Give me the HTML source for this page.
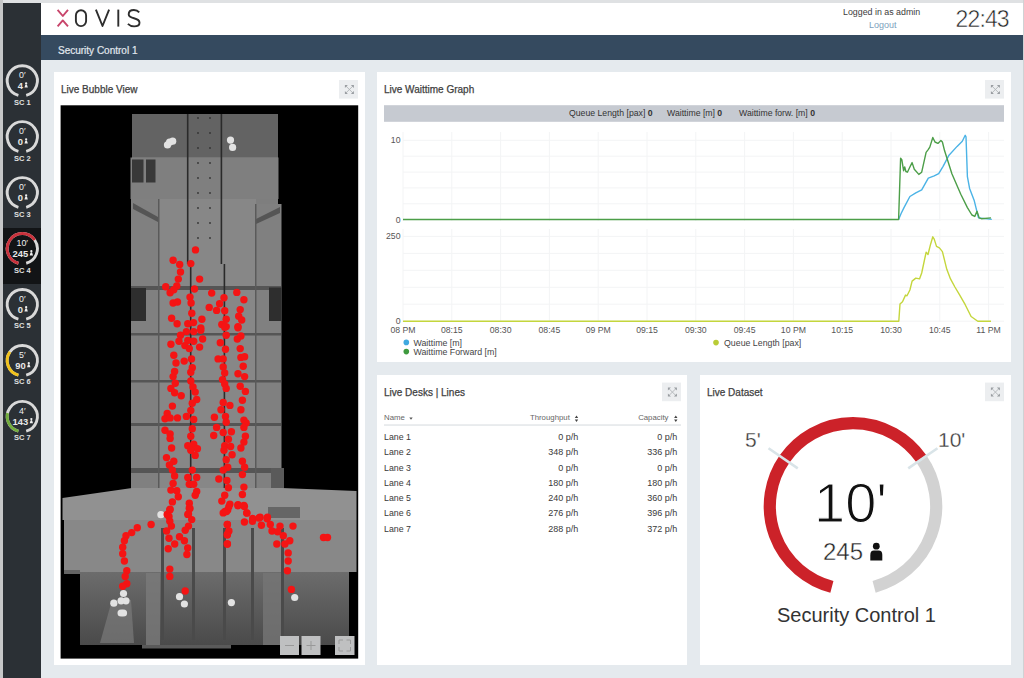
<!DOCTYPE html>
<html><head><meta charset="utf-8">
<style>
*{box-sizing:border-box;margin:0;padding:0}
html,body{width:1024px;height:678px;overflow:hidden;background:#c6c7c8;font-family:"Liberation Sans",sans-serif;color:#333}
.a{position:absolute}
#side{left:3px;top:3px;width:38px;height:675px;background:#2b3035}
#hdr{left:41px;top:3px;width:982px;height:32px;background:#fff}
#nav{left:41px;top:35px;width:982px;height:25px;background:#354a5f}
#cnt{left:41px;top:60px;width:982px;height:618px;background:#e5eaee}
.panel{background:#fff}
.ttl{font-size:10px;color:#3f3f3f;white-space:nowrap;-webkit-text-stroke:0.25px #3f3f3f}
.exp{width:19px;height:19px;background:#e8ebee}
.exp svg{position:absolute;left:0;top:0}
.t{white-space:nowrap;line-height:1}
</style></head><body>
<div class="a" style="left:3px;top:0;width:1021px;height:3px;background:#dfe1e3"></div>
<div class="a" style="left:1023px;top:0;width:1px;height:678px;background:#d0d2d4"></div>
<div class="a" id="side"></div>
<div class="a" id="hdr"></div>
<div class="a" id="nav"></div>
<div class="a" id="cnt"></div>

<!-- header content -->
<div class="a t" style="left:843px;top:7.9px;font-size:8.85px;color:#3c3c3c">Logged in as admin</div>
<div class="a t" style="left:869px;top:21px;font-size:9px;color:#7d9fbd">Logout</div>
<div class="a t" style="left:955.5px;top:7.8px;font-size:23px;letter-spacing:-0.85px;color:#222;-webkit-text-stroke:0.5px #fff">22:43</div>
<div class="a t" style="left:58px;top:45.5px;font-size:10px;color:#e2e8ee;-webkit-text-stroke:0.2px #e2e8ee">Security Control 1</div>

<!-- panels -->
<div class="a panel" style="left:54px;top:72px;width:311px;height:593px"></div>
<div class="a panel" style="left:377px;top:72px;width:634px;height:290px"></div>
<div class="a panel" style="left:377px;top:375px;width:310px;height:290px"></div>
<div class="a panel" style="left:700px;top:375px;width:311px;height:290px"></div>

<div class="a t ttl" style="left:61px;top:84.5px">Live Bubble View</div>
<div class="a t ttl" style="left:384px;top:84.5px">Live Waittime Graph</div>
<div class="a t ttl" style="left:384px;top:387.5px">Live Desks | Lines</div>
<div class="a t ttl" style="left:707px;top:387.5px">Live Dataset</div>

<svg class="a" style="left:0;top:0" width="1024" height="678" viewBox="0 0 1024 678">
<rect x="60.6" y="105.3" width="297.6" height="553.3" fill="#000"/>
<rect x="132" y="114" width="146" height="378" fill="#7e7e7e"/>
<rect x="132" y="114" width="146" height="43.5" fill="#636363"/>
<rect x="130.5" y="157.5" width="148" height="41.5" fill="#7f7f7f"/>
<rect x="132" y="159.5" width="11.5" height="23" fill="#383838"/><rect x="146" y="159.5" width="9.5" height="23" fill="#383838"/><rect x="204" y="200.5" width="5" height="5" fill="#222"/>
<rect x="131" y="199" width="27" height="293" fill="#808080"/>
<rect x="256" y="204" width="25.5" height="288" fill="#808080"/>
<rect x="158" y="199" width="98" height="293" fill="#878787"/>
<polygon points="133,203 158,217 158,222 133,209" fill="#555"/>
<polygon points="280,207 256,219 256,224 280,213" fill="#555"/>
<rect x="131" y="286" width="150" height="4" fill="#555"/>
<rect x="131" y="333" width="150" height="2.5" fill="#555"/>
<rect x="131" y="380" width="150" height="2.5" fill="#555"/>
<rect x="131" y="423" width="150" height="3" fill="#555"/>
<rect x="131" y="468" width="150" height="5" fill="#555"/>
<rect x="131" y="288" width="15" height="33" fill="#2e2e2e"/>
<rect x="269" y="287.5" width="12.5" height="33.5" fill="#2e2e2e"/>

<rect x="271" y="468" width="13" height="24" fill="#5a5a5a"/>
<rect x="186.9" y="114" width="1.6" height="150" fill="#2a2a2a"/><rect x="189.9" y="264" width="1.6" height="246" fill="#2a2a2a"/><rect x="158" y="199" width="1.5" height="293" fill="#5a5a5a"/><rect x="255" y="204" width="1.5" height="288" fill="#5a5a5a"/>
<rect x="220.6" y="114" width="1.6" height="150" fill="#2a2a2a"/><rect x="223.6" y="264" width="1.6" height="246" fill="#2a2a2a"/>
<polygon points="62.5,498 132,488 282,488 356.5,491 356.5,520 62.5,520" fill="#919191"/>
<rect x="64" y="520" width="292.5" height="52" fill="#888"/>
<defs><linearGradient id="lg1" x1="0" y1="0" x2="0" y2="1"><stop offset="0" stop-color="#6c6c6c"/><stop offset="1" stop-color="#4a4a4a"/></linearGradient></defs><rect x="80" y="572" width="269" height="73" fill="url(#lg1)"/>
<rect x="64" y="570" width="16" height="4" fill="#646464"/><rect x="349" y="572" width="7.5" height="0" fill="#000"/>
<rect x="142" y="645" width="89" height="3.5" fill="#5a5a5a"/><rect x="268" y="507" width="32" height="11" fill="#666"/>
<rect x="146" y="573" width="14" height="72" fill="#7a7a7a" opacity="0.8"/><rect x="263" y="573" width="18" height="72" fill="#767676" opacity="0.8"/><polygon points="112,600 131,600 134,643 100,643" fill="#7a7a7a" opacity="0.7"/>
<rect x="161" y="528" width="3" height="112" fill="#4a4a4a"/>
<rect x="192" y="528" width="3" height="112" fill="#4a4a4a"/>
<rect x="223" y="528" width="3" height="112" fill="#4a4a4a"/>
<rect x="251" y="528" width="3" height="112" fill="#4a4a4a"/>
<rect x="281" y="528" width="3" height="112" fill="#4a4a4a"/>
<circle cx="198" cy="118" r="0.9" fill="#333"/><circle cx="210" cy="118" r="0.9" fill="#333"/>
<circle cx="198" cy="133" r="0.9" fill="#333"/><circle cx="210" cy="133" r="0.9" fill="#333"/>
<circle cx="198" cy="148" r="0.9" fill="#333"/><circle cx="210" cy="148" r="0.9" fill="#333"/>
<circle cx="198" cy="163" r="0.9" fill="#333"/><circle cx="210" cy="163" r="0.9" fill="#333"/>
<circle cx="198" cy="178" r="0.9" fill="#333"/><circle cx="210" cy="178" r="0.9" fill="#333"/>
<circle cx="198" cy="193" r="0.9" fill="#333"/><circle cx="210" cy="193" r="0.9" fill="#333"/>
<circle cx="198" cy="208" r="0.9" fill="#333"/><circle cx="210" cy="208" r="0.9" fill="#333"/>
<circle cx="198" cy="223" r="0.9" fill="#333"/><circle cx="210" cy="223" r="0.9" fill="#333"/>
<circle cx="198" cy="238" r="0.9" fill="#333"/><circle cx="210" cy="238" r="0.9" fill="#333"/>
<circle cx="169.6" cy="142.2" r="3.6" fill="#e2e2e2"/>
<circle cx="172.7" cy="141.2" r="3.6" fill="#e2e2e2"/>
<circle cx="167.5" cy="144.9" r="3.6" fill="#e2e2e2"/>
<circle cx="230.5" cy="140.1" r="3.6" fill="#e2e2e2"/>
<circle cx="232.6" cy="147.4" r="3.6" fill="#e2e2e2"/>
<circle cx="160.9" cy="514.7" r="3.6" fill="#e2e2e2"/>
<circle cx="123.5" cy="593.5" r="3.6" fill="#e2e2e2"/>
<circle cx="121.1" cy="600.8" r="3.6" fill="#e2e2e2"/>
<circle cx="126.0" cy="600.8" r="3.6" fill="#e2e2e2"/>
<circle cx="113.8" cy="603.2" r="3.6" fill="#e2e2e2"/>
<circle cx="121.1" cy="613.0" r="3.6" fill="#e2e2e2"/>
<circle cx="123.5" cy="613.0" r="3.6" fill="#e2e2e2"/>
<circle cx="179.5" cy="596.7" r="3.6" fill="#e2e2e2"/>
<circle cx="184.4" cy="604.0" r="3.6" fill="#e2e2e2"/>
<circle cx="231.4" cy="602.6" r="3.6" fill="#e2e2e2"/>
<circle cx="294.7" cy="597.5" r="3.6" fill="#e2e2e2"/>
<circle cx="195.5" cy="249.9" r="3.7" fill="#f41414"/>
<circle cx="173.1" cy="260.2" r="3.7" fill="#f41414"/>
<circle cx="179.7" cy="264.4" r="3.7" fill="#f41414"/>
<circle cx="190.8" cy="263.6" r="3.7" fill="#f41414"/>
<circle cx="180.5" cy="272.0" r="3.7" fill="#f41414"/>
<circle cx="178.3" cy="279.1" r="3.7" fill="#f41414"/>
<circle cx="199.6" cy="279.1" r="3.7" fill="#f41414"/>
<circle cx="165.7" cy="286.8" r="3.7" fill="#f41414"/>
<circle cx="176.8" cy="286.0" r="3.7" fill="#f41414"/>
<circle cx="170.1" cy="292.7" r="3.7" fill="#f41414"/>
<circle cx="173.8" cy="289.7" r="3.7" fill="#f41414"/>
<circle cx="194.5" cy="289.0" r="3.7" fill="#f41414"/>
<circle cx="211.7" cy="293.1" r="3.7" fill="#f41414"/>
<circle cx="236.8" cy="292.4" r="3.7" fill="#f41414"/>
<circle cx="190.0" cy="297.1" r="3.7" fill="#f41414"/>
<circle cx="224.0" cy="297.8" r="3.7" fill="#f41414"/>
<circle cx="243.9" cy="299.8" r="3.7" fill="#f41414"/>
<circle cx="173.1" cy="303.0" r="3.7" fill="#f41414"/>
<circle cx="177.5" cy="302.0" r="3.7" fill="#f41414"/>
<circle cx="191.1" cy="303.0" r="3.7" fill="#f41414"/>
<circle cx="219.6" cy="303.7" r="3.7" fill="#f41414"/>
<circle cx="209.2" cy="307.4" r="3.7" fill="#f41414"/>
<circle cx="216.6" cy="310.4" r="3.7" fill="#f41414"/>
<circle cx="224.7" cy="310.8" r="3.7" fill="#f41414"/>
<circle cx="240.2" cy="309.6" r="3.7" fill="#f41414"/>
<circle cx="191.8" cy="313.3" r="3.7" fill="#f41414"/>
<circle cx="171.6" cy="318.2" r="3.7" fill="#f41414"/>
<circle cx="177.1" cy="323.7" r="3.7" fill="#f41414"/>
<circle cx="201.9" cy="319.2" r="3.7" fill="#f41414"/>
<circle cx="187.8" cy="323.7" r="3.7" fill="#f41414"/>
<circle cx="193.5" cy="322.6" r="3.7" fill="#f41414"/>
<circle cx="226.2" cy="319.2" r="3.7" fill="#f41414"/>
<circle cx="221.8" cy="324.4" r="3.7" fill="#f41414"/>
<circle cx="238.7" cy="316.3" r="3.7" fill="#f41414"/>
<circle cx="241.7" cy="320.0" r="3.7" fill="#f41414"/>
<circle cx="238.0" cy="326.6" r="3.7" fill="#f41414"/>
<circle cx="226.2" cy="326.6" r="3.7" fill="#f41414"/>
<circle cx="200.8" cy="328.0" r="3.7" fill="#f41414"/>
<circle cx="200.8" cy="330.2" r="3.7" fill="#f41414"/>
<circle cx="180.5" cy="335.3" r="3.7" fill="#f41414"/>
<circle cx="186.4" cy="331.6" r="3.7" fill="#f41414"/>
<circle cx="193.7" cy="331.6" r="3.7" fill="#f41414"/>
<circle cx="238.0" cy="327.7" r="3.7" fill="#f41414"/>
<circle cx="224.7" cy="327.2" r="3.7" fill="#f41414"/>
<circle cx="226.2" cy="335.3" r="3.7" fill="#f41414"/>
<circle cx="240.9" cy="336.0" r="3.7" fill="#f41414"/>
<circle cx="237.3" cy="339.0" r="3.7" fill="#f41414"/>
<circle cx="202.6" cy="339.0" r="3.7" fill="#f41414"/>
<circle cx="179.0" cy="341.2" r="3.7" fill="#f41414"/>
<circle cx="187.8" cy="340.5" r="3.7" fill="#f41414"/>
<circle cx="193.7" cy="341.2" r="3.7" fill="#f41414"/>
<circle cx="170.9" cy="344.2" r="3.7" fill="#f41414"/>
<circle cx="184.9" cy="345.6" r="3.7" fill="#f41414"/>
<circle cx="189.3" cy="348.6" r="3.7" fill="#f41414"/>
<circle cx="199.6" cy="347.1" r="3.7" fill="#f41414"/>
<circle cx="220.3" cy="342.7" r="3.7" fill="#f41414"/>
<circle cx="225.5" cy="349.3" r="3.7" fill="#f41414"/>
<circle cx="240.2" cy="348.6" r="3.7" fill="#f41414"/>
<circle cx="173.8" cy="355.2" r="3.7" fill="#f41414"/>
<circle cx="191.5" cy="358.9" r="3.7" fill="#f41414"/>
<circle cx="184.2" cy="361.1" r="3.7" fill="#f41414"/>
<circle cx="176.0" cy="363.0" r="3.7" fill="#f41414"/>
<circle cx="218.1" cy="358.9" r="3.7" fill="#f41414"/>
<circle cx="223.2" cy="358.9" r="3.7" fill="#f41414"/>
<circle cx="240.9" cy="357.4" r="3.7" fill="#f41414"/>
<circle cx="244.6" cy="356.7" r="3.7" fill="#f41414"/>
<circle cx="243.2" cy="366.3" r="3.7" fill="#f41414"/>
<circle cx="192.3" cy="367.8" r="3.7" fill="#f41414"/>
<circle cx="223.2" cy="367.0" r="3.7" fill="#f41414"/>
<circle cx="174.6" cy="371.5" r="3.7" fill="#f41414"/>
<circle cx="190.8" cy="372.2" r="3.7" fill="#f41414"/>
<circle cx="224.7" cy="372.9" r="3.7" fill="#f41414"/>
<circle cx="173.1" cy="376.6" r="3.7" fill="#f41414"/>
<circle cx="238.0" cy="373.7" r="3.7" fill="#f41414"/>
<circle cx="244.6" cy="376.6" r="3.7" fill="#f41414"/>
<circle cx="190.8" cy="381.0" r="3.7" fill="#f41414"/>
<circle cx="222.5" cy="379.6" r="3.7" fill="#f41414"/>
<circle cx="175.3" cy="383.3" r="3.7" fill="#f41414"/>
<circle cx="224.7" cy="384.0" r="3.7" fill="#f41414"/>
<circle cx="193.0" cy="387.0" r="3.7" fill="#f41414"/>
<circle cx="170.9" cy="388.4" r="3.7" fill="#f41414"/>
<circle cx="226.2" cy="388.4" r="3.7" fill="#f41414"/>
<circle cx="240.2" cy="386.2" r="3.7" fill="#f41414"/>
<circle cx="245.4" cy="391.4" r="3.7" fill="#f41414"/>
<circle cx="174.6" cy="392.8" r="3.7" fill="#f41414"/>
<circle cx="181.2" cy="395.8" r="3.7" fill="#f41414"/>
<circle cx="195.2" cy="392.1" r="3.7" fill="#f41414"/>
<circle cx="196.7" cy="399.5" r="3.7" fill="#f41414"/>
<circle cx="242.4" cy="400.2" r="3.7" fill="#f41414"/>
<circle cx="172.4" cy="406.1" r="3.7" fill="#f41414"/>
<circle cx="192.3" cy="403.2" r="3.7" fill="#f41414"/>
<circle cx="223.2" cy="402.4" r="3.7" fill="#f41414"/>
<circle cx="229.9" cy="405.4" r="3.7" fill="#f41414"/>
<circle cx="190.8" cy="410.5" r="3.7" fill="#f41414"/>
<circle cx="221.0" cy="409.8" r="3.7" fill="#f41414"/>
<circle cx="240.9" cy="409.8" r="3.7" fill="#f41414"/>
<circle cx="167.2" cy="413.5" r="3.7" fill="#f41414"/>
<circle cx="165.0" cy="418.7" r="3.7" fill="#f41414"/>
<circle cx="170.1" cy="417.9" r="3.7" fill="#f41414"/>
<circle cx="177.5" cy="417.9" r="3.7" fill="#f41414"/>
<circle cx="186.4" cy="416.4" r="3.7" fill="#f41414"/>
<circle cx="193.7" cy="419.4" r="3.7" fill="#f41414"/>
<circle cx="214.4" cy="417.2" r="3.7" fill="#f41414"/>
<circle cx="225.5" cy="416.4" r="3.7" fill="#f41414"/>
<circle cx="226.2" cy="422.3" r="3.7" fill="#f41414"/>
<circle cx="243.9" cy="420.1" r="3.7" fill="#f41414"/>
<circle cx="246.1" cy="423.0" r="3.7" fill="#f41414"/>
<circle cx="165.0" cy="430.3" r="3.7" fill="#f41414"/>
<circle cx="170.1" cy="434.0" r="3.7" fill="#f41414"/>
<circle cx="170.1" cy="438.4" r="3.7" fill="#f41414"/>
<circle cx="190.8" cy="436.2" r="3.7" fill="#f41414"/>
<circle cx="192.3" cy="428.8" r="3.7" fill="#f41414"/>
<circle cx="213.7" cy="435.5" r="3.7" fill="#f41414"/>
<circle cx="216.6" cy="427.4" r="3.7" fill="#f41414"/>
<circle cx="223.2" cy="432.5" r="3.7" fill="#f41414"/>
<circle cx="231.4" cy="431.8" r="3.7" fill="#f41414"/>
<circle cx="228.4" cy="439.2" r="3.7" fill="#f41414"/>
<circle cx="243.9" cy="427.4" r="3.7" fill="#f41414"/>
<circle cx="245.4" cy="436.2" r="3.7" fill="#f41414"/>
<circle cx="243.9" cy="442.1" r="3.7" fill="#f41414"/>
<circle cx="240.9" cy="448.0" r="3.7" fill="#f41414"/>
<circle cx="171.6" cy="448.0" r="3.7" fill="#f41414"/>
<circle cx="187.8" cy="445.8" r="3.7" fill="#f41414"/>
<circle cx="193.7" cy="444.3" r="3.7" fill="#f41414"/>
<circle cx="197.4" cy="448.8" r="3.7" fill="#f41414"/>
<circle cx="190.8" cy="450.2" r="3.7" fill="#f41414"/>
<circle cx="195.2" cy="455.4" r="3.7" fill="#f41414"/>
<circle cx="224.7" cy="445.8" r="3.7" fill="#f41414"/>
<circle cx="230.6" cy="446.5" r="3.7" fill="#f41414"/>
<circle cx="224.0" cy="450.2" r="3.7" fill="#f41414"/>
<circle cx="232.1" cy="454.7" r="3.7" fill="#f41414"/>
<circle cx="166.5" cy="457.6" r="3.7" fill="#f41414"/>
<circle cx="173.8" cy="461.3" r="3.7" fill="#f41414"/>
<circle cx="169.4" cy="465.0" r="3.7" fill="#f41414"/>
<circle cx="226.2" cy="459.8" r="3.7" fill="#f41414"/>
<circle cx="242.4" cy="461.3" r="3.7" fill="#f41414"/>
<circle cx="244.6" cy="467.2" r="3.7" fill="#f41414"/>
<circle cx="172.4" cy="470.1" r="3.7" fill="#f41414"/>
<circle cx="227.7" cy="467.2" r="3.7" fill="#f41414"/>
<circle cx="223.2" cy="470.1" r="3.7" fill="#f41414"/>
<circle cx="192.3" cy="470.1" r="3.7" fill="#f41414"/>
<circle cx="174.6" cy="476.0" r="3.7" fill="#f41414"/>
<circle cx="242.4" cy="474.6" r="3.7" fill="#f41414"/>
<circle cx="187.8" cy="477.5" r="3.7" fill="#f41414"/>
<circle cx="196.7" cy="477.5" r="3.7" fill="#f41414"/>
<circle cx="218.8" cy="479.0" r="3.7" fill="#f41414"/>
<circle cx="226.9" cy="480.5" r="3.7" fill="#f41414"/>
<circle cx="173.1" cy="483.4" r="3.7" fill="#f41414"/>
<circle cx="189.3" cy="484.2" r="3.7" fill="#f41414"/>
<circle cx="193.7" cy="484.2" r="3.7" fill="#f41414"/>
<circle cx="228.4" cy="487.8" r="3.7" fill="#f41414"/>
<circle cx="243.9" cy="487.1" r="3.7" fill="#f41414"/>
<circle cx="170.9" cy="490.1" r="3.7" fill="#f41414"/>
<circle cx="176.8" cy="490.8" r="3.7" fill="#f41414"/>
<circle cx="196.7" cy="491.5" r="3.7" fill="#f41414"/>
<circle cx="195.2" cy="495.2" r="3.7" fill="#f41414"/>
<circle cx="178.3" cy="496.7" r="3.7" fill="#f41414"/>
<circle cx="242.4" cy="494.5" r="3.7" fill="#f41414"/>
<circle cx="224.7" cy="495.2" r="3.7" fill="#f41414"/>
<circle cx="221.8" cy="501.1" r="3.7" fill="#f41414"/>
<circle cx="229.9" cy="504.1" r="3.7" fill="#f41414"/>
<circle cx="172.4" cy="501.9" r="3.7" fill="#f41414"/>
<circle cx="189.3" cy="503.3" r="3.7" fill="#f41414"/>
<circle cx="190.0" cy="508.5" r="3.7" fill="#f41414"/>
<circle cx="170.1" cy="509.2" r="3.7" fill="#f41414"/>
<circle cx="167.2" cy="514.4" r="3.7" fill="#f41414"/>
<circle cx="187.8" cy="514.4" r="3.7" fill="#f41414"/>
<circle cx="238.0" cy="504.8" r="3.7" fill="#f41414"/>
<circle cx="243.9" cy="505.5" r="3.7" fill="#f41414"/>
<circle cx="246.8" cy="512.9" r="3.7" fill="#f41414"/>
<circle cx="227.7" cy="510.0" r="3.7" fill="#f41414"/>
<circle cx="223.2" cy="512.9" r="3.7" fill="#f41414"/>
<circle cx="252.7" cy="518.5" r="3.7" fill="#f41414"/>
<circle cx="260.1" cy="517.3" r="3.7" fill="#f41414"/>
<circle cx="267.5" cy="517.3" r="3.7" fill="#f41414"/>
<circle cx="137.3" cy="527.7" r="3.7" fill="#f41414"/>
<circle cx="151.1" cy="524.5" r="3.7" fill="#f41414"/>
<circle cx="131.7" cy="532.6" r="3.7" fill="#f41414"/>
<circle cx="126.0" cy="535.8" r="3.7" fill="#f41414"/>
<circle cx="124.4" cy="540.7" r="3.7" fill="#f41414"/>
<circle cx="122.7" cy="547.2" r="3.7" fill="#f41414"/>
<circle cx="122.7" cy="553.7" r="3.7" fill="#f41414"/>
<circle cx="124.4" cy="561.0" r="3.7" fill="#f41414"/>
<circle cx="126.8" cy="570.7" r="3.7" fill="#f41414"/>
<circle cx="125.2" cy="576.4" r="3.7" fill="#f41414"/>
<circle cx="126.8" cy="583.7" r="3.7" fill="#f41414"/>
<circle cx="122.7" cy="586.2" r="3.7" fill="#f41414"/>
<circle cx="169.8" cy="509.9" r="3.7" fill="#f41414"/>
<circle cx="169.0" cy="516.4" r="3.7" fill="#f41414"/>
<circle cx="169.8" cy="521.2" r="3.7" fill="#f41414"/>
<circle cx="171.4" cy="526.1" r="3.7" fill="#f41414"/>
<circle cx="166.6" cy="531.0" r="3.7" fill="#f41414"/>
<circle cx="169.0" cy="538.3" r="3.7" fill="#f41414"/>
<circle cx="174.7" cy="544.0" r="3.7" fill="#f41414"/>
<circle cx="168.2" cy="548.8" r="3.7" fill="#f41414"/>
<circle cx="179.5" cy="536.7" r="3.7" fill="#f41414"/>
<circle cx="184.4" cy="540.7" r="3.7" fill="#f41414"/>
<circle cx="187.7" cy="548.0" r="3.7" fill="#f41414"/>
<circle cx="186.9" cy="554.5" r="3.7" fill="#f41414"/>
<circle cx="189.3" cy="508.2" r="3.7" fill="#f41414"/>
<circle cx="188.5" cy="513.9" r="3.7" fill="#f41414"/>
<circle cx="191.7" cy="519.6" r="3.7" fill="#f41414"/>
<circle cx="188.5" cy="526.1" r="3.7" fill="#f41414"/>
<circle cx="185.2" cy="530.2" r="3.7" fill="#f41414"/>
<circle cx="169.8" cy="569.1" r="3.7" fill="#f41414"/>
<circle cx="169.8" cy="576.4" r="3.7" fill="#f41414"/>
<circle cx="185.2" cy="591.0" r="3.7" fill="#f41414"/>
<circle cx="225.0" cy="511.5" r="3.7" fill="#f41414"/>
<circle cx="227.4" cy="524.5" r="3.7" fill="#f41414"/>
<circle cx="227.4" cy="534.2" r="3.7" fill="#f41414"/>
<circle cx="227.4" cy="544.0" r="3.7" fill="#f41414"/>
<circle cx="226.5" cy="511.5" r="3.7" fill="#f41414"/>
<circle cx="228.9" cy="506.6" r="3.7" fill="#f41414"/>
<circle cx="237.9" cy="505.8" r="3.7" fill="#f41414"/>
<circle cx="244.4" cy="506.6" r="3.7" fill="#f41414"/>
<circle cx="246.8" cy="513.1" r="3.7" fill="#f41414"/>
<circle cx="244.4" cy="522.0" r="3.7" fill="#f41414"/>
<circle cx="252.5" cy="521.2" r="3.7" fill="#f41414"/>
<circle cx="259.0" cy="518.0" r="3.7" fill="#f41414"/>
<circle cx="267.1" cy="518.8" r="3.7" fill="#f41414"/>
<circle cx="261.4" cy="525.3" r="3.7" fill="#f41414"/>
<circle cx="270.3" cy="524.5" r="3.7" fill="#f41414"/>
<circle cx="280.0" cy="526.1" r="3.7" fill="#f41414"/>
<circle cx="293.0" cy="526.1" r="3.7" fill="#f41414"/>
<circle cx="272.0" cy="531.0" r="3.7" fill="#f41414"/>
<circle cx="277.6" cy="531.8" r="3.7" fill="#f41414"/>
<circle cx="283.3" cy="535.8" r="3.7" fill="#f41414"/>
<circle cx="289.8" cy="540.7" r="3.7" fill="#f41414"/>
<circle cx="276.8" cy="544.0" r="3.7" fill="#f41414"/>
<circle cx="284.9" cy="544.0" r="3.7" fill="#f41414"/>
<circle cx="288.2" cy="552.9" r="3.7" fill="#f41414"/>
<circle cx="288.2" cy="561.0" r="3.7" fill="#f41414"/>
<circle cx="287.4" cy="570.7" r="3.7" fill="#f41414"/>
<circle cx="291.4" cy="589.4" r="3.7" fill="#f41414"/>
<circle cx="323.5" cy="537.5" r="3.7" fill="#f41414"/>
<circle cx="327.5" cy="537.5" r="3.7" fill="#f41414"/>
<circle cx="227.3" cy="524.5" r="3.7" fill="#f41414"/>
<circle cx="228.9" cy="531.0" r="3.7" fill="#f41414"/>
<circle cx="227.3" cy="535.0" r="3.7" fill="#f41414"/>
<circle cx="227.3" cy="544.0" r="3.7" fill="#f41414"/>
<rect x="280" y="636" width="19" height="19" fill="#bfc0c1"/>
<rect x="301.5" y="636" width="19" height="19" fill="#bfc0c1"/>
<rect x="335" y="636" width="19.5" height="19" fill="#bfc0c1"/>
<rect x="285" y="645" width="9" height="1" fill="#999"/>
<rect x="306.5" y="645" width="9" height="1" fill="#999"/><rect x="310.5" y="641" width="1" height="9" fill="#999"/>
<path d="M339,640 h4 M339,640 v4 M350.5,640 h-4 M350.5,640 v4 M339,651 h4 M339,651 v-4 M350.5,651 h-4 M350.5,651 v-4" stroke="#999" stroke-width="1" fill="none"/>
</svg>
<svg class="a" style="left:0;top:0" width="1024" height="678" viewBox="0 0 1024 678">
<rect x="384" y="105.2" width="620" height="16.6" fill="#c6cad1"/>
<line x1="403.0" y1="132" x2="403.0" y2="221" stroke="#f3f4f5" stroke-width="1"/>
<line x1="403.0" y1="229" x2="403.0" y2="322" stroke="#f3f4f5" stroke-width="1"/>
<line x1="451.8" y1="132" x2="451.8" y2="221" stroke="#f3f4f5" stroke-width="1"/>
<line x1="451.8" y1="229" x2="451.8" y2="322" stroke="#f3f4f5" stroke-width="1"/>
<line x1="500.6" y1="132" x2="500.6" y2="221" stroke="#f3f4f5" stroke-width="1"/>
<line x1="500.6" y1="229" x2="500.6" y2="322" stroke="#f3f4f5" stroke-width="1"/>
<line x1="549.4" y1="132" x2="549.4" y2="221" stroke="#f3f4f5" stroke-width="1"/>
<line x1="549.4" y1="229" x2="549.4" y2="322" stroke="#f3f4f5" stroke-width="1"/>
<line x1="598.2" y1="132" x2="598.2" y2="221" stroke="#f3f4f5" stroke-width="1"/>
<line x1="598.2" y1="229" x2="598.2" y2="322" stroke="#f3f4f5" stroke-width="1"/>
<line x1="647.0" y1="132" x2="647.0" y2="221" stroke="#f3f4f5" stroke-width="1"/>
<line x1="647.0" y1="229" x2="647.0" y2="322" stroke="#f3f4f5" stroke-width="1"/>
<line x1="695.8" y1="132" x2="695.8" y2="221" stroke="#f3f4f5" stroke-width="1"/>
<line x1="695.8" y1="229" x2="695.8" y2="322" stroke="#f3f4f5" stroke-width="1"/>
<line x1="744.6" y1="132" x2="744.6" y2="221" stroke="#f3f4f5" stroke-width="1"/>
<line x1="744.6" y1="229" x2="744.6" y2="322" stroke="#f3f4f5" stroke-width="1"/>
<line x1="793.4" y1="132" x2="793.4" y2="221" stroke="#f3f4f5" stroke-width="1"/>
<line x1="793.4" y1="229" x2="793.4" y2="322" stroke="#f3f4f5" stroke-width="1"/>
<line x1="842.2" y1="132" x2="842.2" y2="221" stroke="#f3f4f5" stroke-width="1"/>
<line x1="842.2" y1="229" x2="842.2" y2="322" stroke="#f3f4f5" stroke-width="1"/>
<line x1="891.0" y1="132" x2="891.0" y2="221" stroke="#f3f4f5" stroke-width="1"/>
<line x1="891.0" y1="229" x2="891.0" y2="322" stroke="#f3f4f5" stroke-width="1"/>
<line x1="939.8" y1="132" x2="939.8" y2="221" stroke="#f3f4f5" stroke-width="1"/>
<line x1="939.8" y1="229" x2="939.8" y2="322" stroke="#f3f4f5" stroke-width="1"/>
<line x1="988.6" y1="132" x2="988.6" y2="221" stroke="#f3f4f5" stroke-width="1"/>
<line x1="988.6" y1="229" x2="988.6" y2="322" stroke="#f3f4f5" stroke-width="1"/>
<line x1="403" y1="140.3" x2="1004" y2="140.3" stroke="#f3f4f5" stroke-width="1"/>
<line x1="403" y1="236.4" x2="1004" y2="236.4" stroke="#f3f4f5" stroke-width="1"/>
<line x1="403" y1="156.2" x2="1004" y2="156.2" stroke="#f3f4f5" stroke-width="1"/>
<line x1="403" y1="253.4" x2="1004" y2="253.4" stroke="#f3f4f5" stroke-width="1"/>
<line x1="403" y1="172.1" x2="1004" y2="172.1" stroke="#f3f4f5" stroke-width="1"/>
<line x1="403" y1="270.3" x2="1004" y2="270.3" stroke="#f3f4f5" stroke-width="1"/>
<line x1="403" y1="187.9" x2="1004" y2="187.9" stroke="#f3f4f5" stroke-width="1"/>
<line x1="403" y1="287.3" x2="1004" y2="287.3" stroke="#f3f4f5" stroke-width="1"/>
<line x1="403" y1="203.8" x2="1004" y2="203.8" stroke="#f3f4f5" stroke-width="1"/>
<line x1="403" y1="304.2" x2="1004" y2="304.2" stroke="#f3f4f5" stroke-width="1"/>
<line x1="403" y1="219.7" x2="1004" y2="219.7" stroke="#f3f4f5" stroke-width="1"/>
<line x1="403" y1="321.2" x2="1004" y2="321.2" stroke="#f3f4f5" stroke-width="1"/>
<polyline fill="none" stroke="#4bb3e6" stroke-width="1.4" stroke-linejoin="round" points="898.6,219.4 901.1,213.5 904.0,207.6 909.9,196.5 915.8,192.8 921.7,189.9 928.3,178.1 934.2,175.9 938.7,173.7 943.1,166.3 949.0,155.2 957.1,146.4 962.3,141.2 965.2,135.3 966.0,136.8 967.4,176.6 969.6,188.4 974.1,200.2 978.5,217.9 991.8,219.4"/>
<polyline fill="none" stroke="#4c9e48" stroke-width="1.4" stroke-linejoin="round" points="403.0,219.5 898.6,219.5 900.6,158.2 901.8,159.7 903.6,170.7 904.7,167.0 905.9,171.5 907.4,172.2 909.9,167.0 912.1,162.6 914.3,169.2 918.8,174.4 921.7,172.2 926.1,152.3 928.0,149.8 929.8,147.1 932.8,137.5 935.0,142.0 937.9,143.4 940.9,140.5 942.4,142.0 944.6,150.8 951.9,173.7 960.8,194.3 967.4,207.6 971.9,215.0 974.8,216.4 977.0,211.3 979.2,217.9 981.4,218.7 991.0,217.9"/>
<polyline fill="none" stroke="#c4d63c" stroke-width="1.4" stroke-linejoin="round" points="403.0,321.2 898.8,321.2 900.0,304.0 902.5,301.7 905.5,295.1 907.0,295.8 909.9,290.0 912.1,281.1 915.8,278.1 919.5,278.9 921.7,273.0 926.1,252.3 928.0,254.5 930.6,244.2 932.8,236.8 934.2,239.1 936.5,246.4 939.4,247.9 942.4,251.6 946.8,269.3 950.5,278.9 954.9,287.0 959.3,294.4 965.2,304.7 971.1,316.5 977.8,321.2 991.0,321.2"/>
<circle cx="406.3" cy="342.4" r="2.8" fill="#3fa9e0"/>
<circle cx="406.3" cy="351.6" r="2.8" fill="#3f9a3f"/>
<circle cx="716" cy="342.6" r="2.8" fill="#b9cc36"/>
</svg>
<div class="a t" style="left:569px;top:108.5px;font-size:8.7px;color:#333">Queue Length [pax] <b>0</b></div>
<div class="a t" style="left:667px;top:108.5px;font-size:8.7px;color:#333">Waittime [m] <b>0</b></div>
<div class="a t" style="left:739px;top:108.5px;font-size:8.7px;color:#333">Waittime forw. [m] <b>0</b></div>
<div class="a t" style="right:623.5px;top:136.3px;font-size:8.7px;color:#555">10</div>
<div class="a t" style="right:623.5px;top:215.6px;font-size:8.7px;color:#555">0</div>
<div class="a t" style="right:623.5px;top:232.4px;font-size:8.7px;color:#555">250</div>
<div class="a t" style="right:623.5px;top:317.2px;font-size:8.7px;color:#555">0</div>
<div class="a t" style="left:373.0px;width:60px;text-align:center;top:326.2px;font-size:8.7px;color:#555">08 PM</div>
<div class="a t" style="left:421.8px;width:60px;text-align:center;top:326.2px;font-size:8.7px;color:#555">08:15</div>
<div class="a t" style="left:470.6px;width:60px;text-align:center;top:326.2px;font-size:8.7px;color:#555">08:30</div>
<div class="a t" style="left:519.4px;width:60px;text-align:center;top:326.2px;font-size:8.7px;color:#555">08:45</div>
<div class="a t" style="left:568.2px;width:60px;text-align:center;top:326.2px;font-size:8.7px;color:#555">09 PM</div>
<div class="a t" style="left:617.0px;width:60px;text-align:center;top:326.2px;font-size:8.7px;color:#555">09:15</div>
<div class="a t" style="left:665.8px;width:60px;text-align:center;top:326.2px;font-size:8.7px;color:#555">09:30</div>
<div class="a t" style="left:714.6px;width:60px;text-align:center;top:326.2px;font-size:8.7px;color:#555">09:45</div>
<div class="a t" style="left:763.4px;width:60px;text-align:center;top:326.2px;font-size:8.7px;color:#555">10 PM</div>
<div class="a t" style="left:812.2px;width:60px;text-align:center;top:326.2px;font-size:8.7px;color:#555">10:15</div>
<div class="a t" style="left:861.0px;width:60px;text-align:center;top:326.2px;font-size:8.7px;color:#555">10:30</div>
<div class="a t" style="left:909.8px;width:60px;text-align:center;top:326.2px;font-size:8.7px;color:#555">10:45</div>
<div class="a t" style="left:958.6px;width:60px;text-align:center;top:326.2px;font-size:8.7px;color:#555">11 PM</div>
<div class="a t" style="left:413.5px;top:339px;font-size:8.8px;color:#444">Waittime [m]</div>
<div class="a t" style="left:413.5px;top:348px;font-size:8.8px;color:#444">Waittime Forward [m]</div>
<div class="a t" style="left:724px;top:339px;font-size:8.8px;color:#444">Queue Length [pax]</div>
<div class="a t" style="left:384px;top:414.0px;font-size:7.8px;color:#666">Name</div>
<svg class="a" style="left:0;top:0" width="1024" height="678"><path d="M409.3,417.6 L412.7,417.6 L411,419.8 Z" fill="#555"/><path d="M574.8,418 L578.2,418 L576.5,415.6 Z M574.8,419.6 L578.2,419.6 L576.5,422 Z" fill="#444"/><path d="M674.1,418 L677.5,418 L675.8,415.6 Z M674.1,419.6 L677.5,419.6 L675.8,422 Z" fill="#444"/><rect x="384" y="424.3" width="297" height="1.5" fill="#e3e6e9"/></svg>
<div class="a t" style="right:454.20000000000005px;top:414.0px;font-size:7.8px;color:#666">Throughput</div>
<div class="a t" style="right:355.5px;top:414.0px;font-size:7.8px;color:#666">Capacity</div>
<div class="a t" style="left:384px;top:433.00px;font-size:8.8px;color:#3a3a3a">Lane 1</div>
<div class="a t" style="right:445.70000000000005px;top:433.00px;font-size:9px;color:#3a3a3a">0 p/h</div>
<div class="a t" style="right:346.70000000000005px;top:433.00px;font-size:9px;color:#3a3a3a">0 p/h</div>
<div class="a t" style="left:384px;top:448.27px;font-size:8.8px;color:#3a3a3a">Lane 2</div>
<div class="a t" style="right:445.70000000000005px;top:448.27px;font-size:9px;color:#3a3a3a">348 p/h</div>
<div class="a t" style="right:346.70000000000005px;top:448.27px;font-size:9px;color:#3a3a3a">336 p/h</div>
<div class="a t" style="left:384px;top:463.54px;font-size:8.8px;color:#3a3a3a">Lane 3</div>
<div class="a t" style="right:445.70000000000005px;top:463.54px;font-size:9px;color:#3a3a3a">0 p/h</div>
<div class="a t" style="right:346.70000000000005px;top:463.54px;font-size:9px;color:#3a3a3a">0 p/h</div>
<div class="a t" style="left:384px;top:478.81px;font-size:8.8px;color:#3a3a3a">Lane 4</div>
<div class="a t" style="right:445.70000000000005px;top:478.81px;font-size:9px;color:#3a3a3a">180 p/h</div>
<div class="a t" style="right:346.70000000000005px;top:478.81px;font-size:9px;color:#3a3a3a">180 p/h</div>
<div class="a t" style="left:384px;top:494.08px;font-size:8.8px;color:#3a3a3a">Lane 5</div>
<div class="a t" style="right:445.70000000000005px;top:494.08px;font-size:9px;color:#3a3a3a">240 p/h</div>
<div class="a t" style="right:346.70000000000005px;top:494.08px;font-size:9px;color:#3a3a3a">360 p/h</div>
<div class="a t" style="left:384px;top:509.35px;font-size:8.8px;color:#3a3a3a">Lane 6</div>
<div class="a t" style="right:445.70000000000005px;top:509.35px;font-size:9px;color:#3a3a3a">276 p/h</div>
<div class="a t" style="right:346.70000000000005px;top:509.35px;font-size:9px;color:#3a3a3a">396 p/h</div>
<div class="a t" style="left:384px;top:524.62px;font-size:8.8px;color:#3a3a3a">Lane 7</div>
<div class="a t" style="right:445.70000000000005px;top:524.62px;font-size:9px;color:#3a3a3a">288 p/h</div>
<div class="a t" style="right:346.70000000000005px;top:524.62px;font-size:9px;color:#3a3a3a">372 p/h</div>
<svg class="a" style="left:0;top:0" width="1024" height="678" viewBox="0 0 1024 678">
<path d="M921.15,458.58 A83.2,83.2 0 0 1 874.11,586.78" fill="none" stroke="#d2d2d2" stroke-width="12.2"/>
<path d="M831.89,586.78 A83.2,83.2 0 1 1 921.15,458.58" fill="none" stroke="#cc2229" stroke-width="12.2"/>
<line x1="797.78" y1="468.35" x2="768.53" y2="448.24" stroke="#d9e4e8" stroke-width="2.6"/>
<line x1="908.22" y1="468.35" x2="937.47" y2="448.24" stroke="#d9e4e8" stroke-width="2.6"/>
<circle cx="876.3" cy="546.2" r="3.4" fill="#111"/>
<path d="M870.3,560.4 L870.3,555 Q870.3,550.6 874,550.6 L878.6,550.6 Q882.3,550.6 882.3,555 L882.3,560.4 Z" fill="#111"/>
</svg>
<div class="a t" style="left:814px;top:474.5px;font-size:56px;color:#111;-webkit-text-stroke:1.2px #fff">10&#39;</div>
<div class="a t" style="left:823px;top:540px;font-size:24px;color:#222;-webkit-text-stroke:0.4px #fff">245</div>
<div class="a t" style="left:745px;top:429px;font-size:21px;color:#3a3a3a;-webkit-text-stroke:0.3px #fff">5&#39;</div>
<div class="a t" style="left:938px;top:429px;font-size:21px;color:#3a3a3a;-webkit-text-stroke:0.3px #fff">10&#39;</div>
<div class="a t" style="left:777px;top:605px;font-size:20px;color:#333">Security Control 1</div>
<div class="a" style="left:3px;top:227.9px;width:38px;height:56px;background:#121416"></div>
<svg class="a" style="left:0;top:0" width="60" height="678">
<path d="M18.39,95.39 A15.1,15.1 0 1 1 26.21,95.39" fill="none" stroke="#d9d9d9" stroke-width="2.9"/>
<circle cx="26.15" cy="83.40" r="1.15" fill="#eee"/><path d="M24.45,87.60 L25.35,84.70 Q26.15,84.10 26.95,84.70 L27.85,87.60 Z" fill="#eee"/>
<path d="M18.39,151.34 A15.1,15.1 0 1 1 26.21,151.34" fill="none" stroke="#d9d9d9" stroke-width="2.9"/>
<circle cx="26.15" cy="139.35" r="1.15" fill="#eee"/><path d="M24.45,143.55 L25.35,140.65 Q26.15,140.05 26.95,140.65 L27.85,143.55 Z" fill="#eee"/>
<path d="M18.39,207.29 A15.1,15.1 0 1 1 26.21,207.29" fill="none" stroke="#d9d9d9" stroke-width="2.9"/>
<circle cx="26.15" cy="195.30" r="1.15" fill="#eee"/><path d="M24.45,199.50 L25.35,196.60 Q26.15,196.00 26.95,196.60 L27.85,199.50 Z" fill="#eee"/>
<path d="M18.39,263.24 A15.1,15.1 0 1 1 26.21,263.24" fill="none" stroke="#d9d9d9" stroke-width="2.9"/>
<path d="M18.39,263.24 A15.1,15.1 0 1 1 34.67,239.99" fill="none" stroke="#c9323c" stroke-width="2.9"/>
<circle cx="31.35" cy="251.25" r="1.15" fill="#eee"/><path d="M29.65,255.45 L30.55,252.55 Q31.35,251.95 32.15,252.55 L33.05,255.45 Z" fill="#eee"/>
<path d="M18.39,319.19 A15.1,15.1 0 1 1 26.21,319.19" fill="none" stroke="#d9d9d9" stroke-width="2.9"/>
<circle cx="26.15" cy="307.20" r="1.15" fill="#eee"/><path d="M24.45,311.40 L25.35,308.50 Q26.15,307.90 26.95,308.50 L27.85,311.40 Z" fill="#eee"/>
<path d="M18.39,375.14 A15.1,15.1 0 1 1 26.21,375.14" fill="none" stroke="#d9d9d9" stroke-width="2.9"/>
<path d="M18.39,375.14 A15.1,15.1 0 0 1 9.93,351.89" fill="none" stroke="#f2c21a" stroke-width="2.9"/>
<circle cx="28.75" cy="363.15" r="1.15" fill="#eee"/><path d="M27.05,367.35 L27.95,364.45 Q28.75,363.85 29.55,364.45 L30.45,367.35 Z" fill="#eee"/>
<path d="M18.39,431.09 A15.1,15.1 0 1 1 26.21,431.09" fill="none" stroke="#d9d9d9" stroke-width="2.9"/>
<path d="M18.39,431.09 A15.1,15.1 0 0 1 7.59,413.10" fill="none" stroke="#73ad3c" stroke-width="2.9"/>
<circle cx="31.35" cy="419.10" r="1.15" fill="#eee"/><path d="M29.65,423.30 L30.55,420.40 Q31.35,419.80 32.15,420.40 L33.05,423.30 Z" fill="#eee"/>
</svg>
<div class="a t" style="left:12.3px;width:20px;text-align:center;top:71.4px;font-size:8.8px;color:#f0f0f0">0&#8242;</div>
<div class="a t" style="left:17.8px;top:81.2px;font-size:9.4px;font-weight:bold;color:#e8e8e8">4</div>
<div class="a t" style="left:7.3px;width:30px;text-align:center;top:98.6px;font-size:7.5px;font-weight:bold;color:#e0e0e0">SC 1</div>
<div class="a t" style="left:12.3px;width:20px;text-align:center;top:127.4px;font-size:8.8px;color:#f0f0f0">0&#8242;</div>
<div class="a t" style="left:17.8px;top:137.2px;font-size:9.4px;font-weight:bold;color:#e8e8e8">0</div>
<div class="a t" style="left:7.3px;width:30px;text-align:center;top:154.6px;font-size:7.5px;font-weight:bold;color:#e0e0e0">SC 2</div>
<div class="a t" style="left:12.3px;width:20px;text-align:center;top:183.3px;font-size:8.8px;color:#f0f0f0">0&#8242;</div>
<div class="a t" style="left:17.8px;top:193.1px;font-size:9.4px;font-weight:bold;color:#e8e8e8">0</div>
<div class="a t" style="left:7.3px;width:30px;text-align:center;top:210.5px;font-size:7.5px;font-weight:bold;color:#e0e0e0">SC 3</div>
<div class="a t" style="left:12.3px;width:20px;text-align:center;top:239.3px;font-size:8.8px;color:#f0f0f0">10&#8242;</div>
<div class="a t" style="left:12.6px;top:249.1px;font-size:9.4px;font-weight:bold;color:#e8e8e8">245</div>
<div class="a t" style="left:7.3px;width:30px;text-align:center;top:266.5px;font-size:7.5px;font-weight:bold;color:#e0e0e0">SC 4</div>
<div class="a t" style="left:12.3px;width:20px;text-align:center;top:295.2px;font-size:8.8px;color:#f0f0f0">0&#8242;</div>
<div class="a t" style="left:17.8px;top:305.0px;font-size:9.4px;font-weight:bold;color:#e8e8e8">0</div>
<div class="a t" style="left:7.3px;width:30px;text-align:center;top:322.4px;font-size:7.5px;font-weight:bold;color:#e0e0e0">SC 5</div>
<div class="a t" style="left:12.3px;width:20px;text-align:center;top:351.1px;font-size:8.8px;color:#f0f0f0">5&#8242;</div>
<div class="a t" style="left:15.2px;top:360.9px;font-size:9.4px;font-weight:bold;color:#e8e8e8">90</div>
<div class="a t" style="left:7.3px;width:30px;text-align:center;top:378.4px;font-size:7.5px;font-weight:bold;color:#e0e0e0">SC 6</div>
<div class="a t" style="left:12.3px;width:20px;text-align:center;top:407.1px;font-size:8.8px;color:#f0f0f0">4&#8242;</div>
<div class="a t" style="left:12.6px;top:416.9px;font-size:9.4px;font-weight:bold;color:#e8e8e8">143</div>
<div class="a t" style="left:7.3px;width:30px;text-align:center;top:434.3px;font-size:7.5px;font-weight:bold;color:#e0e0e0">SC 7</div>
<svg class="a" style="left:0;top:0" width="1024" height="678" viewBox="0 0 1024 678">
<g fill="none" stroke="#c8456b" stroke-width="1.9" stroke-linejoin="round"><polyline points="57.6,9.8 62.8,16.0 68,9.8"/><polyline points="57.6,26.3 62.8,20.4 68,26.3"/></g>
<g fill="none" stroke="#2e2e2e" stroke-width="1.9"><rect x="75.9" y="10.3" width="10.2" height="15.8" rx="5.1"/><polyline points="95.9,9.6 102.5,26.0 109.1,9.6" stroke-linejoin="round"/><line x1="118.3" y1="9.6" x2="118.3" y2="26.6"/><path d="M139.2,12.3 C137.8,10.6 136,10 133.9,10 C130.6,10 128.7,11.8 128.7,14.3 C128.7,17 131,17.6 134,18.3 C137.4,19.1 139.5,20.1 139.5,22.7 C139.5,25.1 137.5,26.4 134.2,26.4 C131.6,26.4 129.6,25.6 127.9,23.9"/></g>
<rect x="339" y="80" width="19" height="18.6" fill="#eceef0"/><g fill="#9a9ea2"><path d="M344.9,85.0 h3 l-3,3 z M353.9,85.0 h-3 l3,3 z M344.9,94.0 h3 l-3,-3 z M353.9,94.0 h-3 l3,-3 z"/></g><path d="M345.9,86.0 L352.9,93.0 M352.9,86.0 L345.9,93.0" stroke="#9a9ea2" stroke-width="0.9" opacity="0.7"/>
<rect x="985" y="80" width="19" height="18.6" fill="#eceef0"/><g fill="#9a9ea2"><path d="M990.9,85.0 h3 l-3,3 z M999.9,85.0 h-3 l3,3 z M990.9,94.0 h3 l-3,-3 z M999.9,94.0 h-3 l3,-3 z"/></g><path d="M991.9,86.0 L998.9,93.0 M998.9,86.0 L991.9,93.0" stroke="#9a9ea2" stroke-width="0.9" opacity="0.7"/>
<rect x="662" y="382.6" width="19" height="18.6" fill="#eceef0"/><g fill="#9a9ea2"><path d="M667.9,387.6 h3 l-3,3 z M676.9,387.6 h-3 l3,3 z M667.9,396.6 h3 l-3,-3 z M676.9,396.6 h-3 l3,-3 z"/></g><path d="M668.9,388.6 L675.9,395.6 M675.9,388.6 L668.9,395.6" stroke="#9a9ea2" stroke-width="0.9" opacity="0.7"/>
<rect x="985" y="382.6" width="19" height="18.6" fill="#eceef0"/><g fill="#9a9ea2"><path d="M990.9,387.6 h3 l-3,3 z M999.9,387.6 h-3 l3,3 z M990.9,396.6 h3 l-3,-3 z M999.9,396.6 h-3 l3,-3 z"/></g><path d="M991.9,388.6 L998.9,395.6 M998.9,388.6 L991.9,395.6" stroke="#9a9ea2" stroke-width="0.9" opacity="0.7"/>
</svg>
</body></html>
